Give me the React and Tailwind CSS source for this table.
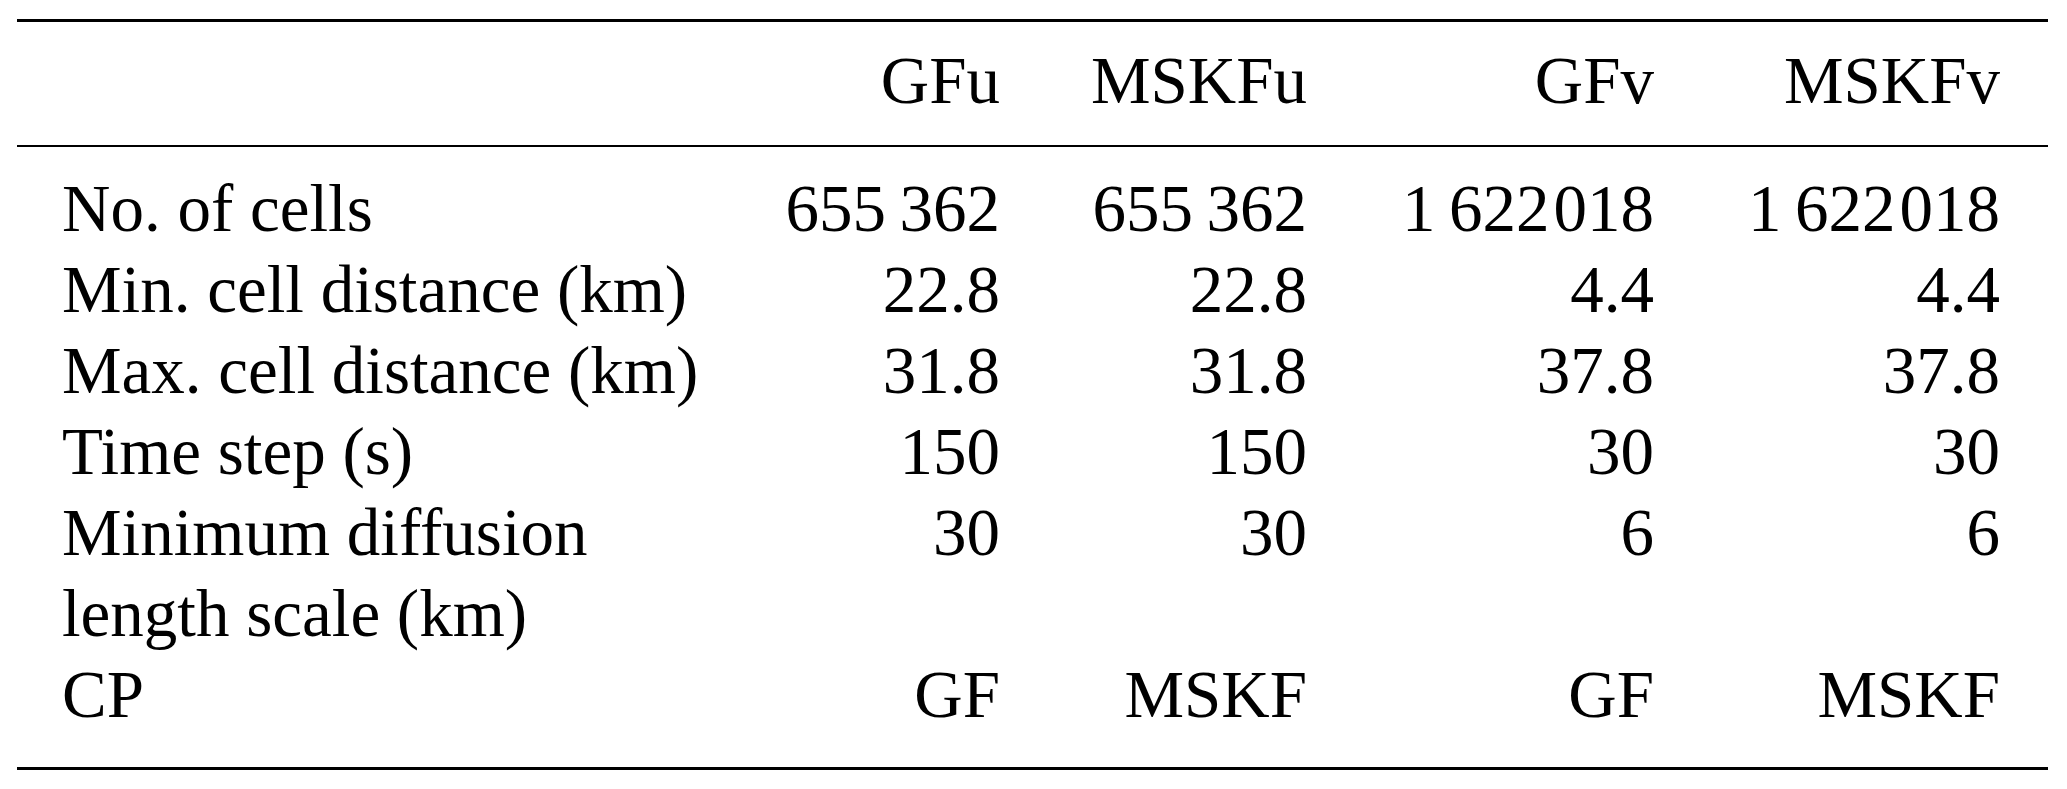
const cols = ['GFu', 'MSKFu', 'GFv', 'MSKFv'];

// the millions figure has a tighter gap before the last group
const Million = () => (
  <>1{'\u2009'}622<span className="inline-block w-[4px]"></span>018</>
);

const rows = [
  { label: 'No. of cells', values: ['655\u2009362', '655\u2009362', <Million />, <Million />] },
  { label: 'Min. cell distance (km)', values: ['22.8', '22.8', '4.4', '4.4'] },
  { label: 'Max. cell distance (km)', values: ['31.8', '31.8', '37.8', '37.8'] },
  { label: 'Time step (s)', values: ['150', '150', '30', '30'] },
  { label: ['Minimum diffusion', 'length scale (km)'], values: ['30', '30', '6', '6'] },
  { label: 'CP', values: ['GF', 'MSKF', 'GF', 'MSKF'] },
];

// label column + four right aligned value columns
const grid = 'grid grid-cols-[638px_300px_307px_347px_346px] pl-[45px] pr-[48px]';

export default function App() {
  return (
    <div className="w-[2067px] h-[789px] bg-white pt-[19px] pl-[17px] text-black font-['Liberation_Serif','Times_New_Roman',serif] text-[67px] leading-[81px]">
      <div className="w-[2031px] border-t-[3px] border-b-[3px] border-black">
        <div className={`${grid} pt-[18px] pb-[24px] border-b-2 border-black`}>
          <div></div>
          {cols.map(c => (
            <div key={c} className="text-right">{c}</div>
          ))}
        </div>
        <div className="pt-[21px] pb-[32px]">
          {rows.map((r, i) => (
            <div key={i} className={grid}>
              <div>
                {Array.isArray(r.label)
                  ? r.label.map(l => <div key={l}>{l}</div>)
                  : r.label}
              </div>
              {r.values.map((v, j) => (
                <div key={j} className="text-right whitespace-nowrap">{v}</div>
              ))}
            </div>
          ))}
        </div>
      </div>
    </div>
  );
}
